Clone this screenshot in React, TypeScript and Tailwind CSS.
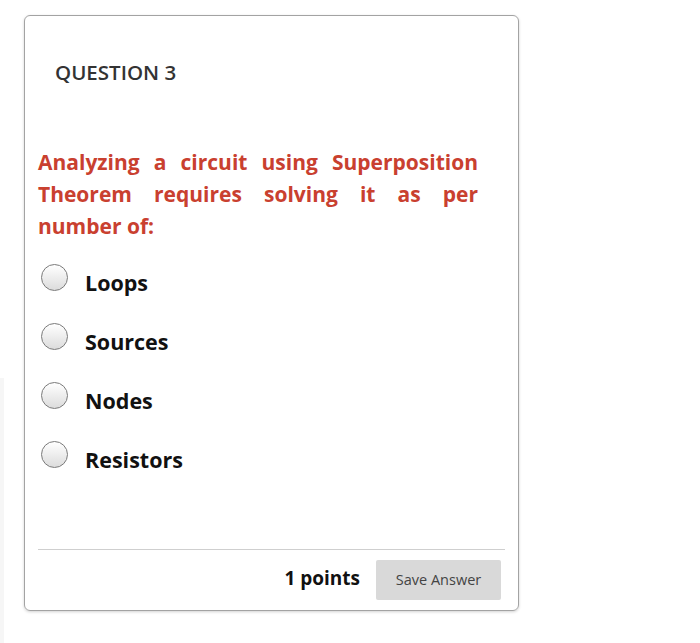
import React, { useState } from 'react';

const options = ['Loops', 'Sources', 'Nodes', 'Resistors'];

const Radio = ({ checked }: { checked: boolean }) => (
  <span className="flex h-[27px] w-[27px] shrink-0 items-center justify-center rounded-full border-[1.5px] border-[#7a7a7a] bg-gradient-to-b from-white to-[#dcdcdc]">
    {checked && <span className="h-[11px] w-[11px] rounded-full bg-[#333]" />}
  </span>
);

export default function App() {
  const [selected, setSelected] = useState<number | null>(null);

  return (
    <div className="relative h-[643px] w-[700px] bg-white pl-[24px] pt-[15px] font-['Open_Sans',sans-serif]">
      <div className="absolute bottom-0 left-0 top-[378px] w-[4px] bg-[#f6f6f6]" />
      <div className="flex h-[596px] w-[495px] flex-col rounded-[6px] border border-[#a3a3a3] shadow-[0_1px_3px_rgba(0,0,0,0.18)]">
        <h2 className="pl-[30px] pt-[43px] text-[20.5px] font-semibold leading-[26px] text-[#333]">QUESTION 3</h2>
        <p className="mt-[61px] w-[453px] pl-[13px] text-justify text-[21px] font-bold leading-[32px] text-[#c9402f]">
          Analyzing a circuit using Superposition Theorem requires solving it as per number of:
        </p>
        <div className="mt-[22px] flex flex-col gap-[32px] pl-[16px]">
          {options.map((opt, i) => (
            <label
              key={opt}
              className="flex h-[27px] cursor-pointer items-start gap-[17px]"
              onClick={() => setSelected(i)}
            >
              <Radio checked={selected === i} />
              <span className="mt-[-2px] text-[21.5px] font-bold leading-[42px] text-[#111]">{opt}</span>
            </label>
          ))}
        </div>
        <div className="mt-auto mx-[13px] border-t border-[#cfcfcf]" />
        <div className="flex items-center justify-end gap-[16px] pb-[10px] pr-[17px] pt-[10px]">
          <span className="mt-[-3px] text-[19px] font-bold text-[#111]">1 points</span>
          <button className="h-[40px] w-[125px] rounded-[2px] bg-[#d9d9d9] text-[14.5px] text-[#444]">Save Answer</button>
        </div>
      </div>
    </div>
  );
}
